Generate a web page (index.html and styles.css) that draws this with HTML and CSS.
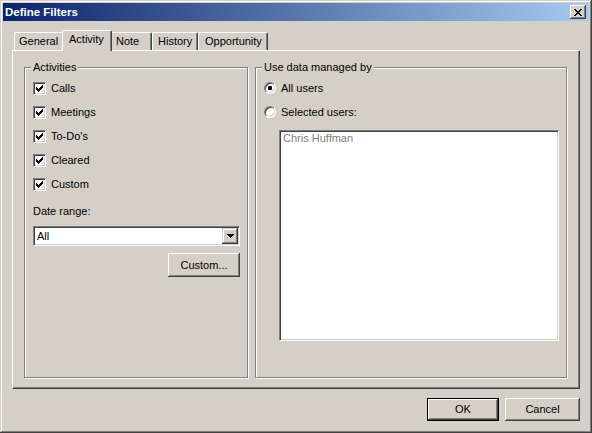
FILE: index.html
```html
<!DOCTYPE html>
<html lang="en">
<head>
    <meta charset="UTF-8">
    <title>Define Filters</title>
    <link rel="stylesheet" href="styles.css">
</head>
<body>
    <div class="window">
        <div class="titlebar">
            <span class="title">Define Filters</span>
            <div class="close-btn">
                <svg width="8" height="7" viewBox="0 0 8 7"><path fill="#000" d="M0 0h2v1H0zM6 0h2v1H6zM1 1h2v1H1zM5 1h2v1H5zM2 2h4v1H2zM3 3h2v1H3zM2 4h4v1H2zM1 5h2v1H1zM5 5h2v1H5zM0 6h2v1H0zM6 6h2v1H6z"/></svg>
            </div>
        </div>

        <div class="dialog-body">
            <div class="tabs">
                <div class="tab tab-general">General</div>
                <div class="tab tab-activity active">Activity</div>
                <div class="tab tab-note">Note</div>
                <div class="tab tab-history">History</div>
                <div class="tab tab-opportunity">Opportunity</div>
            </div>

            <div class="panel">
                <fieldset class="group group-activities">
                    <legend>Activities</legend>
                    <div class="check-row">
                        <span class="checkbox"><svg width="7" height="7" viewBox="0 0 7 7"><path d="M6 0h1v1H6zM5 1h2v1H5zM0 2h1v1H0zM4 2h3v1H4zM0 3h2v1H0zM3 3h3v1H3zM0 4h5v1H0zM1 5h3v1H1zM2 6h1v1H2z"/></svg></span>
                        <span>Calls</span>
                    </div>
                    <div class="check-row">
                        <span class="checkbox"><svg width="7" height="7" viewBox="0 0 7 7"><path d="M6 0h1v1H6zM5 1h2v1H5zM0 2h1v1H0zM4 2h3v1H4zM0 3h2v1H0zM3 3h3v1H3zM0 4h5v1H0zM1 5h3v1H1zM2 6h1v1H2z"/></svg></span>
                        <span>Meetings</span>
                    </div>
                    <div class="check-row">
                        <span class="checkbox"><svg width="7" height="7" viewBox="0 0 7 7"><path d="M6 0h1v1H6zM5 1h2v1H5zM0 2h1v1H0zM4 2h3v1H4zM0 3h2v1H0zM3 3h3v1H3zM0 4h5v1H0zM1 5h3v1H1zM2 6h1v1H2z"/></svg></span>
                        <span>To-Do's</span>
                    </div>
                    <div class="check-row">
                        <span class="checkbox"><svg width="7" height="7" viewBox="0 0 7 7"><path d="M6 0h1v1H6zM5 1h2v1H5zM0 2h1v1H0zM4 2h3v1H4zM0 3h2v1H0zM3 3h3v1H3zM0 4h5v1H0zM1 5h3v1H1zM2 6h1v1H2z"/></svg></span>
                        <span>Cleared</span>
                    </div>
                    <div class="check-row">
                        <span class="checkbox"><svg width="7" height="7" viewBox="0 0 7 7"><path d="M6 0h1v1H6zM5 1h2v1H5zM0 2h1v1H0zM4 2h3v1H4zM0 3h2v1H0zM3 3h3v1H3zM0 4h5v1H0zM1 5h3v1H1zM2 6h1v1H2z"/></svg></span>
                        <span>Custom</span>
                    </div>

                    <div class="field-label">Date range:</div>
                    <div class="combo">
                        <span class="combo-value">All</span>
                        <span class="combo-btn"><svg width="7" height="4" viewBox="0 0 7 4"><path d="M0 0h7v1H0zM1 1h5v1H1zM2 2h3v1H2zM3 3h1v1H3z"/></svg></span>
                    </div>
                    <div class="custom-row">
                        <div class="btn btn-custom">Custom...</div>
                    </div>
                </fieldset>

                <fieldset class="group group-users">
                    <legend>Use data managed by</legend>
                    <div class="radio-row">
                        <span class="radio checked"></span>
                        <span>All users</span>
                    </div>
                    <div class="radio-row">
                        <span class="radio"></span>
                        <span>Selected users:</span>
                    </div>
                    <div class="listbox">
                        <div class="list-item">Chris Huffman</div>
                    </div>
                </fieldset>
            </div>

            <div class="dialog-buttons">
                <div class="btn btn-ok">OK</div>
                <div class="btn btn-cancel">Cancel</div>
            </div>
        </div>
    </div>
</body>
</html>
```

FILE: styles.css
```css
* {
    margin: 0;
    padding: 0;
    box-sizing: border-box;
}

body {
    width: 592px;
    height: 433px;
    overflow: hidden;
    background: #d4d0c8;
    font-family: "Liberation Sans", Arial, sans-serif;
    font-size: 11px;
    line-height: 13px;
    color: #000;
}

.window {
    width: 592px;
    height: 433px;
    padding: 3px;
    background: #d4d0c8;
    box-shadow: inset -1px -1px 0 #404040, inset 1px 1px 0 #d4d0c8,
                inset -2px -2px 0 #808080, inset 2px 2px 0 #fff;
}

/* barre de titre */
.titlebar {
    height: 18px;
    display: flex;
    align-items: center;
    justify-content: space-between;
    padding: 0 3px 0 2px;
    background: linear-gradient(to right, #0a246a, #a6caf0);
}

.title {
    color: #fff;
    font-weight: bold;
    font-size: 11.5px;
}

.close-btn {
    width: 16px;
    height: 14px;
    display: flex;
    align-items: center;
    justify-content: center;
    padding-right: 1px;
    background: #d4d0c8;
    box-shadow: inset -1px -1px 0 #404040, inset 1px 1px 0 #fff,
                inset -2px -2px 0 #808080, inset 2px 2px 0 #d4d0c8;
}

.dialog-body {
    padding: 8px 9px 0 9px;
}

/* onglets */
.tabs {
    display: flex;
    align-items: flex-end;
    height: 21px;
    padding-left: 2px;
}

.tab {
    height: 18px;
    padding: 2px 0 0 5px;
    background: #d4d0c8;
    border-top: 1px solid #fff;
    border-left: 1px solid #fff;
    border-right: 1px solid #404040;
    border-radius: 2px 2px 0 0;
    box-shadow: inset -1px 0 0 #808080;
    white-space: nowrap;
}

.tab-general { width: 50px; padding-left: 4px; }
.tab-activity { width: 46px; }
.tab-note { width: 42px; }
.tab-history { width: 46px; }
.tab-opportunity { width: 70px; padding-left: 6px; }

.tab.active {
    position: relative;
    z-index: 1;
    width: 50px;
    height: 21px;
    margin: 0 -2px -1px -2px;
    padding-left: 6px;
}

/* panneau */
.panel {
    display: flex;
    gap: 7px;
    height: 339px;
    padding: 10px 12px 10px 11px;
    border-top: 1px solid #fff;
    border-left: 1px solid #fff;
    border-right: 1px solid #404040;
    border-bottom: 1px solid #404040;
    box-shadow: inset -1px -1px 0 #808080;
}

.group {
    flex: none;
    border: 1px solid #808080;
    box-shadow: inset 1px 1px 0 #fff, 1px 1px 0 #fff;
    padding: 2px 7px 0 8px;
    min-width: 0;
}

.group legend {
    margin-left: -2px;
    padding: 0 2px;
    background: #d4d0c8;
    line-height: 13px;
}

.group-activities { width: 224px; }
.group-users { width: 312px; }

.check-row,
.radio-row {
    display: flex;
    align-items: center;
    gap: 5px;
    height: 24px;
}

.checkbox {
    width: 13px;
    height: 13px;
    display: flex;
    align-items: center;
    justify-content: center;
    background: #fff;
    border: 1px solid;
    border-color: #808080 #fff #fff #808080;
    box-shadow: inset 1px 1px 0 #404040, inset -1px -1px 0 #d4d0c8;
}

.radio {
    position: relative;
    width: 12px;
    height: 12px;
    border-radius: 50%;
    background: #fff;
    border: 1px solid;
    border-color: #808080 #fff #fff #808080;
    box-shadow: inset 1px 1px 0 #404040, inset -1px -1px 0 #d4d0c8;
}

.radio.checked::after {
    content: '';
    position: absolute;
    left: 3px;
    top: 3px;
    width: 4px;
    height: 4px;
    border-radius: 1px;
    background: #000;
}

.field-label {
    margin-top: 9px;
}

.combo {
    display: flex;
    align-items: center;
    height: 20px;
    margin-top: 8px;
    background: #fff;
    border: 1px solid;
    border-color: #808080 #fff #fff #808080;
    box-shadow: inset 1px 1px 0 #404040, inset -1px -1px 0 #d4d0c8;
    padding: 1px;
}

.combo-value {
    flex: 1;
    padding-left: 2px;
}

.combo-btn {
    width: 16px;
    height: 16px;
    display: flex;
    align-items: center;
    justify-content: center;
    background: #d4d0c8;
    box-shadow: inset -1px -1px 0 #404040, inset 1px 1px 0 #d4d0c8,
                inset -2px -2px 0 #808080, inset 2px 2px 0 #fff;
}

.custom-row {
    display: flex;
    justify-content: flex-end;
    margin-top: 7px;
}

.listbox {
    height: 211px;
    margin: 6px 0 0 15px;
    background: #fff;
    border: 1px solid;
    border-color: #808080 #fff #fff #808080;
    box-shadow: inset 1px 1px 0 #404040, inset -1px -1px 0 #d4d0c8;
    padding: 1px 2px;
}

.list-item {
    color: #808080;
    padding-left: 1px;
}

/* boutons */
.btn {
    display: flex;
    align-items: center;
    justify-content: center;
    height: 23px;
    background: #d4d0c8;
    box-shadow: inset -1px -1px 0 #404040, inset 1px 1px 0 #fff,
                inset -2px -2px 0 #808080, inset 2px 2px 0 #d4d0c8;
}

.btn-custom { width: 72px; height: 24px; }

.dialog-buttons {
    display: flex;
    justify-content: flex-end;
    gap: 6px;
    margin-top: 9px;
}

.btn-ok {
    width: 72px;
    border: 1px solid #000;
}

.btn-cancel { width: 75px; }
```
